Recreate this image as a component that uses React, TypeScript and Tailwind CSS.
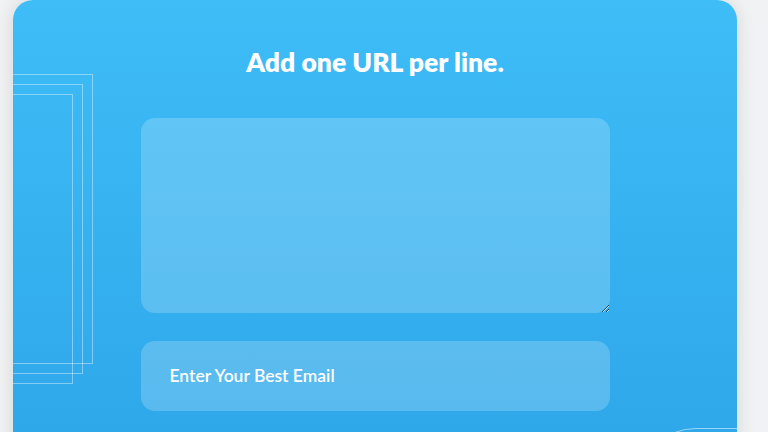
import React from "react";

export default function App() {
  return (
    <div className="w-[768px] h-[432px] overflow-hidden bg-[#f1f2f4] pl-[13px]" style={{ fontFamily: "Lato, 'Open Sans', sans-serif" }}>
      <div className="relative w-[724px] h-[470px] rounded-t-[20px] bg-gradient-to-b from-[#3ebdf7] to-[#2ea6e9] shadow-[0_0_18px_rgba(0,0,0,0.12)] overflow-hidden">
        <div className="absolute left-[-20px] top-[74px] w-[100px] h-[290px] border border-white/40" />
        <div className="absolute left-[-20px] top-[84px] w-[90px] h-[290px] border border-white/40" />
        <div className="absolute left-[-20px] top-[94px] w-[80px] h-[290px] border border-white/40" />
        <div className="absolute left-[623px] top-[428px] w-[200px] h-[120px] rounded-[60px] border border-white/50" />
        <div className="relative flex flex-col items-center pt-[44px]">
          <h1 className="text-white font-extrabold text-[26.5px] leading-[36px]">Add one URL per line.</h1>
          <textarea className="mt-[38px] w-[469px] h-[195px] rounded-[14px] bg-white/20 outline-none resize-y block" />
          <div className="mt-[28px] w-[469px] h-[70px] rounded-[14px] bg-white/20 flex items-center pl-[29px]">
            <span className="text-white text-[17.5px] font-semibold">Enter Your Best Email</span>
          </div>
        </div>
      </div>
    </div>
  );
}
